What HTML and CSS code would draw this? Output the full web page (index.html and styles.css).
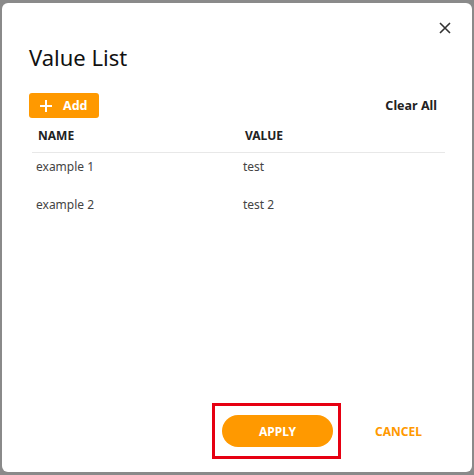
FILE: index.html
```html
<!DOCTYPE html>
<html>
<head>
<meta charset="utf-8">
<link rel="stylesheet" href="styles.css">
</head>
<body>
<div class="dialog">
  <div class="top">
    <button class="close" aria-label="Close">
      <svg width="12" height="12" viewBox="0 0 12 12"><path d="M1 1 L11 11 M11 1 L1 11" stroke="#333" stroke-width="1.6" fill="none"/></svg>
    </button>
  </div>
  <h1 class="title">Value List</h1>
  <div class="toolbar">
    <button class="add">
      <svg width="12" height="12" viewBox="0 0 12 12"><path d="M6 0 V12 M0 6 H12" stroke="#fff" stroke-width="2" fill="none"/></svg>
      <span>Add</span>
    </button>
    <button class="clear">Clear All</button>
  </div>
  <div class="table">
    <div class="row head">
      <div class="c1">NAME</div>
      <div class="c2">VALUE</div>
    </div>
    <div class="row">
      <div class="c1">example 1</div>
      <div class="c2">test</div>
    </div>
    <div class="row">
      <div class="c1">example 2</div>
      <div class="c2">test 2</div>
    </div>
  </div>
  <div class="spacer"></div>
  <div class="footer">
    <div class="highlight">
      <button class="apply">APPLY</button>
    </div>
    <button class="cancel">CANCEL</button>
  </div>
</div>
</body>
</html>
```
FILE: styles.css
```css
html, body {
  margin: 0;
  height: 100%;
}
body {
  background: #8a8a8a;
  padding: 3px 2px 3px 2px;
  box-sizing: border-box;
  font-family: "Noto Sans", "Open Sans", sans-serif;
}
button {
  font-family: inherit;
  border: none;
  background: none;
  padding: 0;
  cursor: pointer;
}
.dialog {
  background: #fff;
  height: 100%;
  border-radius: 6px;
  box-sizing: border-box;
  display: flex;
  flex-direction: column;
  padding: 0 0 0 27px;
}
.top {
  display: flex;
  justify-content: flex-end;
  padding: 19px 21px 0 0;
  height: 20px;
}
.close {
  width: 12px;
  height: 12px;
  display: flex;
}
.title {
  margin: 0;
  font-weight: 400;
  font-size: 22px;
  line-height: 32px;
  color: #111;
  margin-top: -1px;
}
.toolbar {
  display: flex;
  justify-content: space-between;
  align-items: center;
  margin-top: 20px;
  padding-right: 36px;
}
.add {
  background: #ff9900;
  color: #fff;
  border-radius: 3px;
  height: 25px;
  width: 70px;
  display: flex;
  align-items: center;
  padding-left: 11px;
  box-sizing: border-box;
  font-weight: 700;
  font-size: 12.5px;
  gap: 11px;
}
.clear {
  font-weight: 700;
  font-size: 12.5px;
  color: #222;
  margin-right: -1px;
}
.table {
  margin: 10px 27px 0 3px;
}
.row {
  display: grid;
  grid-template-columns: 207px 1fr;
  height: 38px;
  box-sizing: border-box;
  padding-top: 6px;
  align-items: start;
  font-size: 12px;
  line-height: 16px;
  color: #444;
  padding-left: 4px;
}
.row.head {
  height: 25px;
  padding-top: 0;
  font-weight: 700;
  color: #222;
  border-bottom: 1px solid #e8e8e8;
  padding-left: 6px;
}
.spacer { flex: 1; }
.footer {
  display: flex;
  align-items: center;
  padding: 0 0 13px 183px;
}
.highlight {
  border: 3px solid #e60012;
  padding: 9px 5px 9px 7px;
}
.apply {
  width: 111px;
  height: 32px;
  border-radius: 16px;
  background: #ff9900;
  color: #fff;
  font-weight: 700;
  font-size: 12px;
}
.cancel {
  margin-left: 34px;
  color: #ff9900;
  font-weight: 700;
  font-size: 12px;
}
```
